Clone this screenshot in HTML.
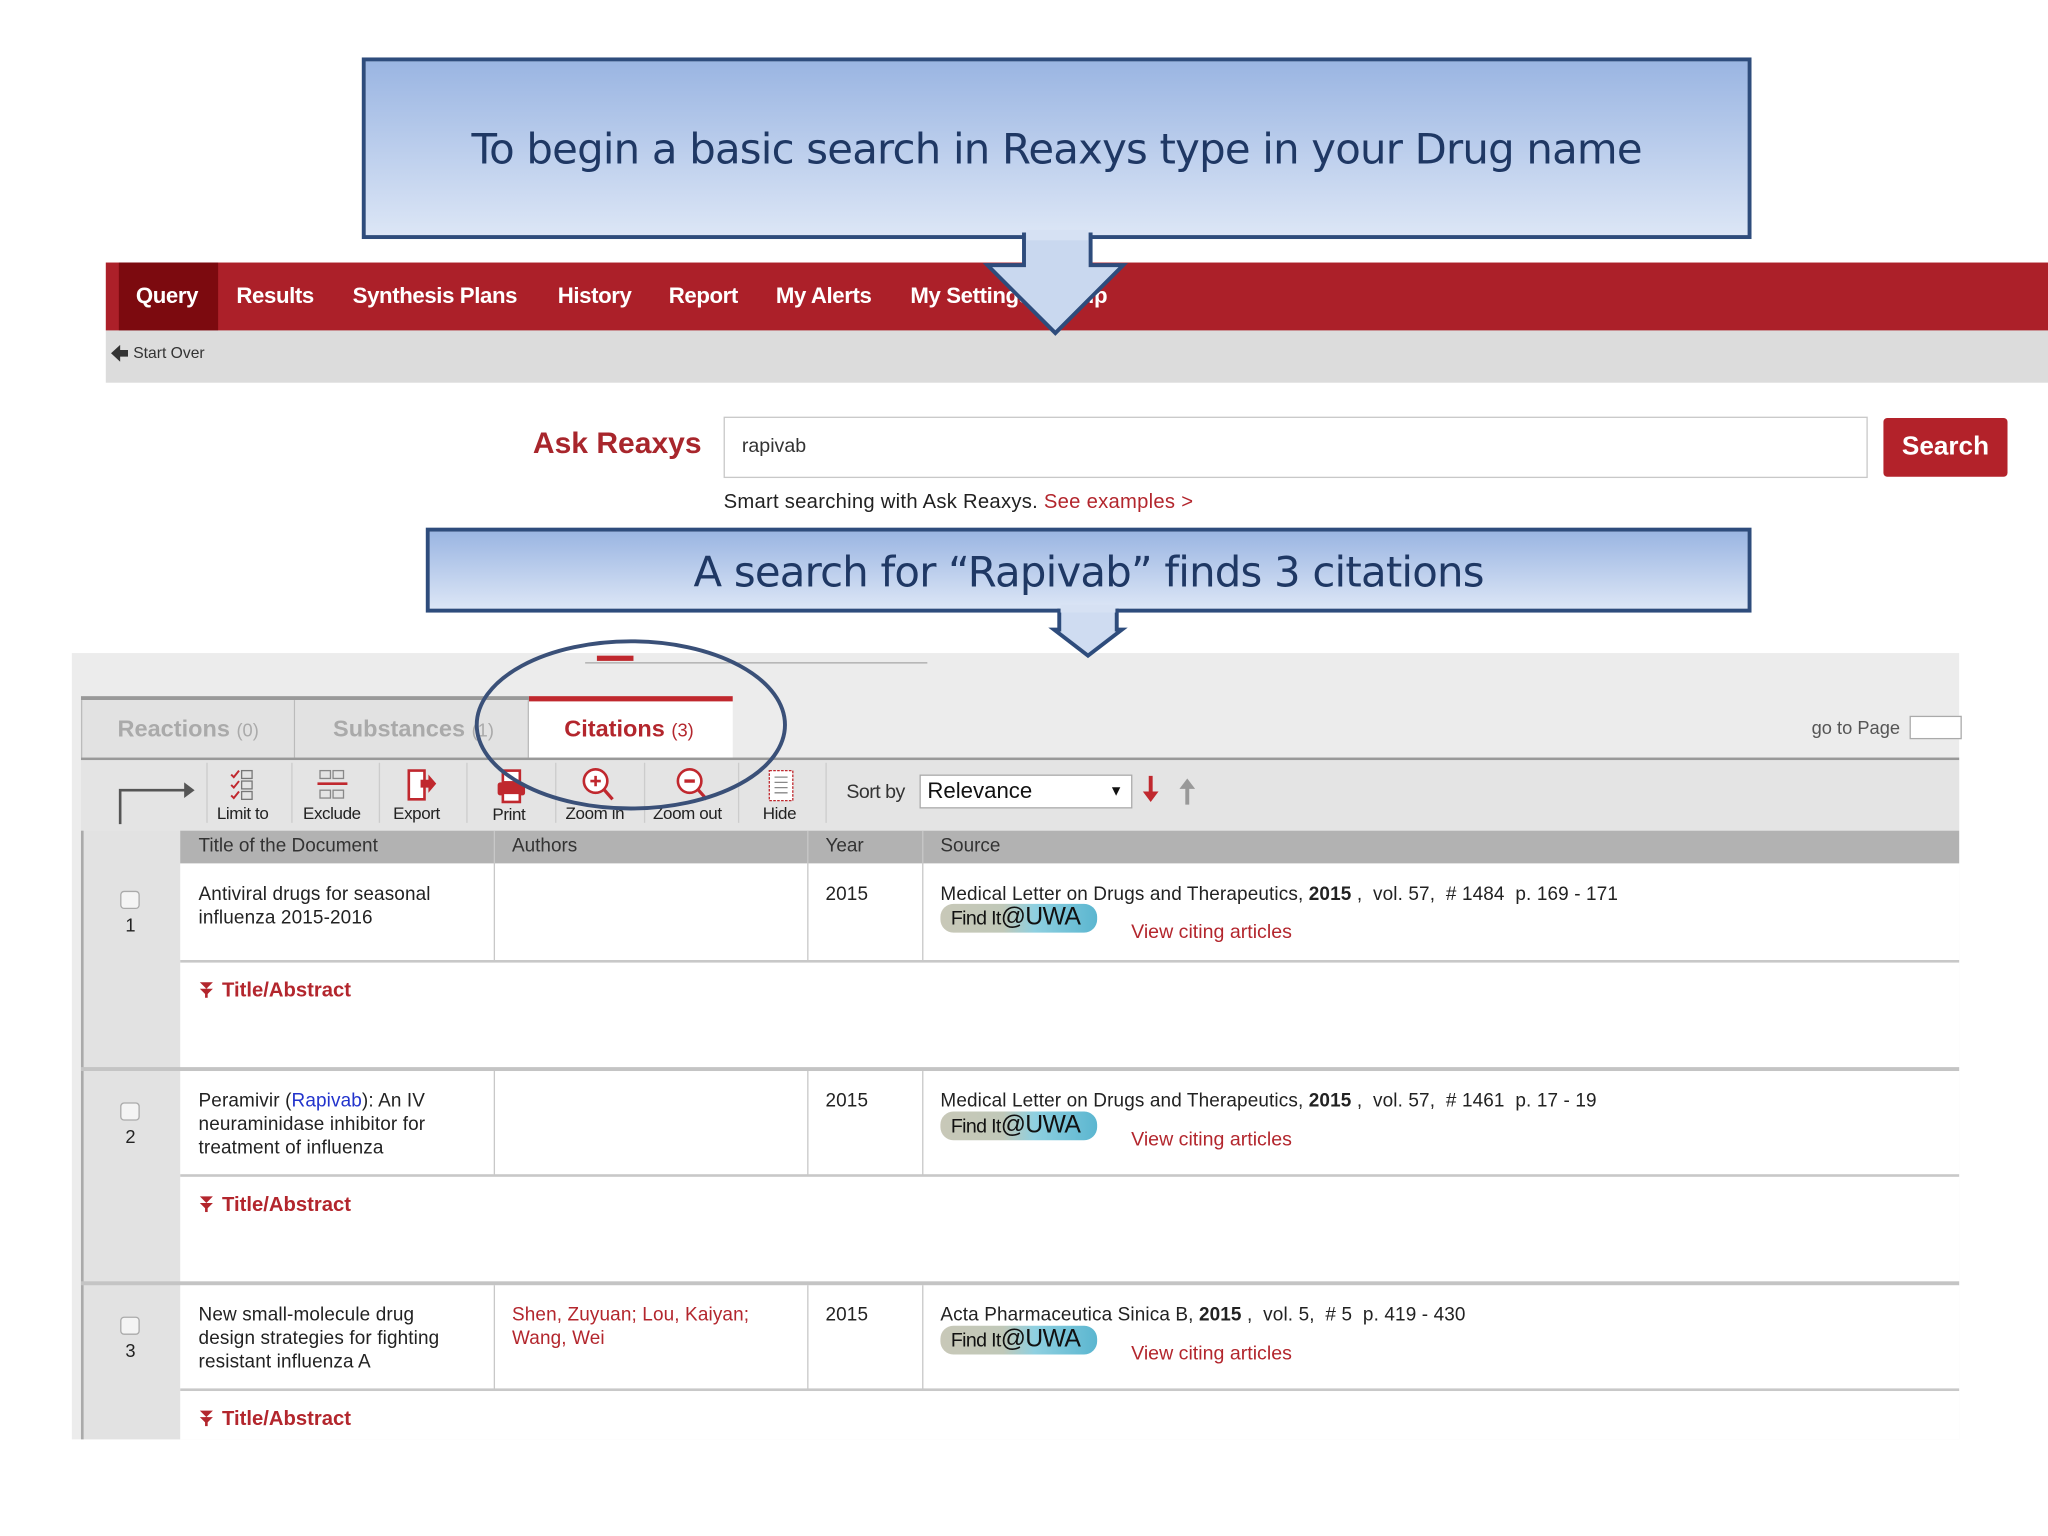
<!DOCTYPE html>
<html><head><meta charset="utf-8"><style>
*{margin:0;padding:0;box-sizing:border-box}
html,body{width:2048px;height:1536px;overflow:hidden;background:#fff}
#w{position:absolute;left:0;top:0;width:1568px;height:1176px;transform:scale(1.306122);transform-origin:0 0;font-family:"Liberation Sans",Arial,sans-serif;color:#222}
.a{position:absolute}
.nav{position:absolute;top:217px;color:#fff;font-weight:bold;font-size:17px;letter-spacing:-0.3px}
.t{font-size:14.5px;letter-spacing:0.1px;color:#222;line-height:18px}
.red{color:#b3262d}
.hdr{position:absolute;top:636px;height:25px;background:#b2b2b2;font-size:14.5px;color:#333;line-height:25px}
.vl{position:absolute;width:1px;background:#c8c8c8}
.hl{position:absolute;height:2px;background:#c8c8c8;left:138px;width:1362px}
.cb{position:absolute;left:92px;width:15px;height:14px;border:1px solid #aaa;border-radius:3px;background:#f4f4f4}
.num{position:absolute;left:96px;font-size:14px}
.find{position:absolute;left:720px;width:120px;height:22px;border-radius:10px;background:linear-gradient(90deg,#c8c8b8 0,#c0c8b8 40%,#8fd0e0 60%,#5bb6d0);font-size:15px;line-height:22px;padding-left:8px;color:#111;letter-spacing:-0.5px}
.find b{font-size:19px;font-weight:normal}
.ta{position:absolute;left:152px;font-weight:bold;font-size:15.5px;color:#b3262d}
.ta svg{vertical-align:-1px;margin-right:6px}
.vc{position:absolute;left:866px;font-size:15px;color:#b3262d;letter-spacing:0px}
.ic{position:absolute;top:620px;font-size:13px;color:#222;letter-spacing:-0.3px}
.sep{position:absolute;top:584px;height:46px;width:1px;background:#ccc}
.call{position:absolute;border:3px solid #2e4c7c;background:linear-gradient(#9ab5e2,#dce6f6);color:#1f3864;text-align:center;font-family:"DejaVu Sans","Liberation Sans",sans-serif}
</style></head><body><div id="w">

<div class="a" style="left:81px;top:201px;width:1487px;height:52px;background:#ac2029"></div>
<div class="a" style="left:91px;top:201px;width:76px;height:52px;background:#7c0a0f"></div>
<div class="nav" style="left:104px">Query</div>
<div class="nav" style="left:181px">Results</div>
<div class="nav" style="left:270px">Synthesis Plans</div>
<div class="nav" style="left:427px">History</div>
<div class="nav" style="left:512px">Report</div>
<div class="nav" style="left:594px">My Alerts</div>
<div class="nav" style="left:697px">My Settings</div>
<div class="nav" style="left:812px">Help</div>
<div class="a" style="left:81px;top:253px;width:1487px;height:40px;background:#dcdcdc"></div>
<svg class="a" style="left:85px;top:264px" width="14" height="13"><path d="M0 6.5L7 0V4H13V9H7V13Z" fill="#333"/></svg>
<div class="a" style="left:102px;top:263px;font-size:12px;color:#333">Start Over</div>

<div class="a" style="left:408px;top:326px;font-size:23px;font-weight:bold;color:#a8262c">Ask Reaxys</div>
<div class="a" style="left:554px;top:319px;width:876px;height:47px;border:1px solid #c8c8c8;background:#fff"></div>
<div class="a" style="left:568px;top:333px;font-size:15px;color:#333">rapivab</div>
<div class="a" style="left:1442px;top:320px;width:95px;height:45px;background:#b3222a;border-radius:3px;color:#fff;font-weight:bold;font-size:20px;text-align:center;line-height:44px">Search</div>
<div class="a" style="left:554px;top:376px;font-size:15.5px;color:#222;letter-spacing:0.2px">Smart searching with Ask Reaxys. <span class="red">See examples &gt;</span></div>

<div class="a" style="left:55px;top:500px;width:1445px;height:602px;background:#ececec"></div>
<div class="a" style="left:448px;top:507px;width:262px;height:1px;background:#aaa"></div>
<div class="a" style="left:457px;top:502px;width:28px;height:4px;background:#c0282e"></div>
<div class="a" style="left:62px;top:533px;width:343px;height:3px;background:#999"></div>
<div class="a" style="left:62px;top:536px;width:164px;height:44px;background:#e2e2e2;border-right:1px solid #bbb;border-left:1px solid #bbb"></div>
<div class="a" style="left:226px;top:536px;width:179px;height:44px;background:#e2e2e2;border-right:1px solid #bbb"></div>
<div class="a" style="left:405px;top:533px;width:156px;height:48px;background:#fff;border-top:4px solid #c0282e"></div>
<div class="a" style="left:90px;top:548px;font-size:18px;font-weight:bold;color:#aaa">Reactions <span style="font-size:14px;font-weight:normal">(0)</span></div>
<div class="a" style="left:255px;top:548px;font-size:18px;font-weight:bold;color:#aaa">Substances <span style="font-size:14px;font-weight:normal">(1)</span></div>
<div class="a" style="left:432px;top:548px;font-size:18px;font-weight:bold;color:#b3262d">Citations <span style="font-size:14px;font-weight:normal">(3)</span></div>
<div class="a" style="left:62px;top:580px;width:1438px;height:2px;background:#999"></div>
<div class="a" style="left:1387px;top:549px;font-size:14px;color:#555">go to Page</div>
<div class="a" style="left:1462px;top:548px;width:40px;height:18px;border:1px solid #aaa;background:#fff"></div>

<div class="a" style="left:62px;top:582px;width:1438px;height:54px;background:#e4e4e4"></div>
<svg class="a" style="left:90px;top:596px" width="62" height="36"><path d="M2 35V9H52" stroke="#555" stroke-width="2" fill="none"/><path d="M51 3L59 9L51 15Z" fill="#555"/></svg>
<div class="sep" style="left:158px"></div><div class="sep" style="left:223px"></div><div class="sep" style="left:290px"></div><div class="sep" style="left:357px"></div><div class="sep" style="left:425px"></div><div class="sep" style="left:493px"></div><div class="sep" style="left:565px"></div><div class="sep" style="left:632px"></div>
<svg class="a" style="left:176px;top:588px" width="22" height="26"><g fill="none" stroke="#777"><rect x="9" y="2" width="8" height="6"/><rect x="9" y="10" width="8" height="6"/><rect x="9" y="18" width="8" height="6"/></g><g stroke="#c0282e" stroke-width="1.5" fill="none"><path d="M1 5l2 2 4-5M1 13l2 2 4-5M1 21l2 2 4-5"/></g></svg>
<svg class="a" style="left:243px;top:588px" width="24" height="26"><g fill="none" stroke="#888"><rect x="2" y="2" width="8" height="6"/><rect x="12" y="2" width="8" height="6"/><rect x="2" y="17" width="8" height="6"/><rect x="12" y="17" width="8" height="6"/></g><path d="M0 12H23" stroke="#c0282e" stroke-width="2"/></svg>
<svg class="a" style="left:310px;top:588px" width="26" height="26"><path d="M3 2H15V24H3Z" fill="#fff" stroke="#c0282e" stroke-width="2"/><path d="M12 9H18V5L24 12L18 19V15H12Z" fill="#c0282e"/></svg>
<svg class="a" style="left:379px;top:588px" width="26" height="28"><rect x="6" y="2" width="13" height="9" fill="#fff" stroke="#c0282e" stroke-width="2"/><rect x="2" y="11" width="21" height="10" rx="2" fill="#c0282e"/><rect x="6" y="19" width="13" height="7" fill="#fff" stroke="#c0282e" stroke-width="2"/></svg>
<svg class="a" style="left:444px;top:587px" width="28" height="28"><circle cx="12" cy="11" r="9" fill="#fff" stroke="#c0282e" stroke-width="2"/><path d="M8 11H16M12 7V15" stroke="#c0282e" stroke-width="2"/><path d="M18 17L25 25" stroke="#c0282e" stroke-width="2.5"/></svg>
<svg class="a" style="left:516px;top:587px" width="28" height="28"><circle cx="12" cy="11" r="9" fill="#fff" stroke="#c0282e" stroke-width="2"/><path d="M8 11H16" stroke="#c0282e" stroke-width="2.5"/><path d="M18 17L25 25" stroke="#c0282e" stroke-width="2.5"/></svg>
<svg class="a" style="left:587px;top:589px" width="22" height="26"><rect x="2" y="1" width="18" height="23" fill="#fff" stroke="#c0282e" stroke-dasharray="2 1"/><path d="M6 6H16M6 10H16M6 14H16M6 18H16" stroke="#888"/></svg>
<div class="ic" style="left:166px;top:615px">Limit to</div>
<div class="ic" style="left:232px;top:615px">Exclude</div>
<div class="ic" style="left:301px;top:615px">Export</div>
<div class="ic" style="left:377px;top:616px">Print</div>
<div class="ic" style="left:433px;top:615px">Zoom in</div>
<div class="ic" style="left:500px;top:615px">Zoom out</div>
<div class="ic" style="left:584px;top:615px">Hide</div>
<div class="a" style="left:648px;top:598px;font-size:15px;color:#333;letter-spacing:-0.4px">Sort by</div>
<div class="a" style="left:704px;top:593px;width:163px;height:26px;border:1px solid #aaa;background:#fff;font-size:17px;line-height:24px;padding-left:5px;color:#111">Relevance<span style="position:absolute;right:6px;font-size:11px">▼</span></div>
<svg class="a" style="left:873px;top:593px" width="45" height="24"><path d="M8 1V16" stroke="#c0282e" stroke-width="3"/><path d="M2 13L8 21L14 13Z" fill="#c0282e"/><path d="M36 23V8" stroke="#999" stroke-width="3"/><path d="M30 11L36 3L42 11Z" fill="#999"/></svg>

<div class="a" style="left:62px;top:636px;width:76px;height:466px;background:#e2e2e2;border-left:2px solid #aaa"></div>
<div class="a" style="left:138px;top:661px;width:1362px;height:441px;background:#fff"></div>
<div class="hdr" style="left:138px;width:1362px"></div>
<div class="hdr" style="left:152px;background:none">Title of the Document</div>
<div class="hdr" style="left:392px;background:none">Authors</div>
<div class="hdr" style="left:632px;background:none">Year</div>
<div class="hdr" style="left:720px;background:none">Source</div>
<div class="vl" style="left:378px;top:636px;height:100px"></div><div class="vl" style="left:618px;top:636px;height:100px"></div><div class="vl" style="left:706px;top:636px;height:100px"></div>
<div class="vl" style="left:378px;top:820px;height:80px"></div><div class="vl" style="left:618px;top:820px;height:80px"></div><div class="vl" style="left:706px;top:820px;height:80px"></div>
<div class="vl" style="left:378px;top:984px;height:80px"></div><div class="vl" style="left:618px;top:984px;height:80px"></div><div class="vl" style="left:706px;top:984px;height:80px"></div>
<div class="hl" style="top:735px"></div>
<div class="a" style="left:62px;top:817px;width:1438px;height:3px;background:#c4c4c4"></div>
<div class="hl" style="top:899px"></div>
<div class="a" style="left:62px;top:981px;width:1438px;height:3px;background:#c4c4c4"></div>
<div class="hl" style="top:1063px"></div>

<div class="cb" style="top:682px"></div><div class="num" style="top:700px">1</div>
<div class="cb" style="top:844px"></div><div class="num" style="top:862px">2</div>
<div class="cb" style="top:1008px"></div><div class="num" style="top:1026px">3</div>

<div class="a t" style="left:152px;top:676px">Antiviral drugs for seasonal<br>influenza 2015-2016</div>
<div class="a t" style="left:632px;top:676px">2015</div>
<div class="a t" style="left:720px;top:676px">Medical Letter on Drugs and Therapeutics, <b>2015</b> ,&nbsp; vol. 57,&nbsp; # 1484&nbsp; p. 169 - 171</div>
<div class="find" style="top:692px">Find It<b>@UWA</b></div>
<div class="vc" style="top:705px">View citing articles</div>

<div class="a t" style="left:152px;top:834px">Peramivir (<span style="color:#2233cc">Rapivab</span>): An IV<br>neuraminidase inhibitor for<br>treatment of influenza</div>
<div class="a t" style="left:632px;top:834px">2015</div>
<div class="a t" style="left:720px;top:834px">Medical Letter on Drugs and Therapeutics, <b>2015</b> ,&nbsp; vol. 57,&nbsp; # 1461&nbsp; p. 17 - 19</div>
<div class="find" style="top:851px">Find It<b>@UWA</b></div>
<div class="vc" style="top:864px">View citing articles</div>

<div class="a t" style="left:152px;top:998px">New small-molecule drug<br>design strategies for fighting<br>resistant influenza A</div>
<div class="a t red" style="left:392px;top:998px">Shen, Zuyuan; Lou, Kaiyan;<br>Wang, Wei</div>
<div class="a t" style="left:632px;top:998px">2015</div>
<div class="a t" style="left:720px;top:998px">Acta Pharmaceutica Sinica B, <b>2015</b> ,&nbsp; vol. 5,&nbsp; # 5&nbsp; p. 419 - 430</div>
<div class="find" style="top:1015px">Find It<b>@UWA</b></div>
<div class="vc" style="top:1028px">View citing articles</div>

<div class="ta" style="top:750px"><svg width="12" height="13"><path d="M1 1L6 6L11 1ZM1 6L6 11L11 6Z" fill="#b3262d"/><path d="M6 6V13" stroke="#b3262d" stroke-width="2"/></svg>Title/Abstract</div>
<div class="ta" style="top:914px"><svg width="12" height="13"><path d="M1 1L6 6L11 1ZM1 6L6 11L11 6Z" fill="#b3262d"/><path d="M6 6V13" stroke="#b3262d" stroke-width="2"/></svg>Title/Abstract</div>
<div class="ta" style="top:1078px"><svg width="12" height="13"><path d="M1 1L6 6L11 1ZM1 6L6 11L11 6Z" fill="#b3262d"/><path d="M6 6V13" stroke="#b3262d" stroke-width="2"/></svg>Title/Abstract</div>

<svg class="a" style="left:360px;top:485px" width="250" height="140"><ellipse cx="123" cy="70" rx="118" ry="64" fill="none" stroke="#3a5078" stroke-width="3"/></svg>

<div class="call" style="left:277px;top:44px;width:1064px;height:139px;font-size:32px;line-height:134px;letter-spacing:-0.6px">To begin a basic search in Reaxys type in your Drug name</div>
<svg class="a" style="left:750px;top:178px" width="116" height="80"><path d="M34 0V25H6L58 77L110 25H85V0" fill="#c9d8ef" stroke="#2e4c7c" stroke-width="3"/></svg>
<div class="a" style="left:786px;top:176px;width:47px;height:8px;background:#d6e1f3"></div>

<div class="call" style="left:326px;top:404px;width:1015px;height:65px;font-size:32px;line-height:62px;letter-spacing:-0.6px">A search for “Rapivab” finds 3 citations</div>
<svg class="a" style="left:802px;top:464px" width="62" height="42"><path d="M9 2V18H5L31 38L57 18H53V2" fill="#cfdcf1" stroke="#2e4c7c" stroke-width="3"/></svg>
<div class="a" style="left:812px;top:463px;width:42px;height:6px;background:#d6e1f3"></div>
</div></body></html>
